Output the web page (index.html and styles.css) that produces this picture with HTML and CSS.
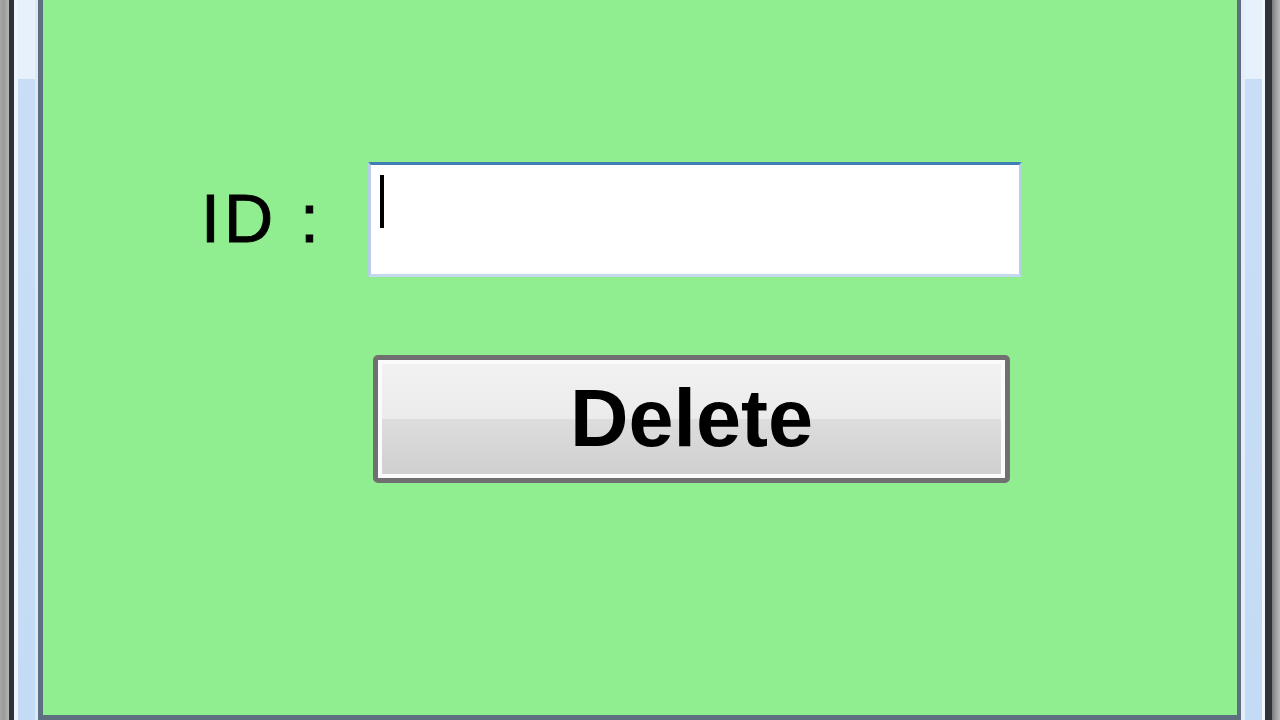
FILE: index.html
```html
<!DOCTYPE html>
<html lang="en">
<head>
<meta charset="utf-8">
<title>Delete</title>
<link rel="stylesheet" href="styles.css">
</head>
<body>
<div class="desk">
  <div class="edge-left"></div>
  <div class="frame">
    <div class="glass">
      <div class="client">
        <div class="row">
          <label class="label" for="id">ID :</label>
          <div class="textbox" id="id"><span class="caret"></span></div>
        </div>
        <button class="btn" type="button">Delete</button>
      </div>
    </div>
  </div>
  <div class="edge-right"></div>
</div>
</body>
</html>
```
FILE: styles.css
```css
html, body {
  margin: 0;
  padding: 0;
  height: 720px;
  overflow: hidden;
}

.desk {
  display: flex;
  height: 720px;
  font-family: "Liberation Sans", Arial, sans-serif;
}

.edge-left {
  width: 9px;
  background: linear-gradient(to right, #a7a7a7 0, #9b9b9b 40%, #b5b5b5 100%);
}

.edge-right {
  width: 8px;
  background: linear-gradient(to right, #7a7a7a 0, #9e9e9e 50%, #b8b8b8 100%);
}

.frame {
  flex: 1;
  display: flex;
  border-left: 5px solid #2e3439;
  border-right: 7px solid #2e3439;
}

.glass {
  flex: 1;
  display: flex;
  border-left: 4px solid #eef5fc;
  border-right: 3px solid #f3f8fd;
  padding: 0 21px 0 20px;
  background: linear-gradient(to bottom, #e7f1fc 0, #e7f1fc 79px, #c9def6 79px, #c4dbf5 100%);
}

.client {
  flex: 1;
  background: #90ee90;
  border-left: 5px solid #5c6e7f;
  border-right: 4px solid #5c6e7f;
  border-bottom: 5px solid #5c6e7f;
  box-shadow: -3px 0 0 #dbe8f5, 4px 0 0 #e4eef9;
  padding-top: 162px;
  box-sizing: border-box;
}

.row {
  display: flex;
  align-items: flex-start;
}

.label {
  width: 167px;
  margin-left: 158px;
  margin-top: 22px;
  font-size: 68px;
  line-height: 68px;
  letter-spacing: 4px;
  color: #000;
  -webkit-text-stroke: 1px #000;
}

.textbox {
  background: #fff;
  border-top: 3px solid #3f7fb6;
  border-left: 3px solid #b6cfe7;
  border-right: 3px solid #b6cfe7;
  border-bottom: 3px solid #c4d9ee;
  border-radius: 2px;
  padding: 10px 0 0 9px;
  box-sizing: content-box;
  height: 99px;
  width: 639px;
}

.caret {
  display: block;
  width: 4px;
  height: 53px;
  background: #000;
}

.btn {
  display: flex;
  align-items: center;
  justify-content: center;
  margin: 78px 0 0 330px;
  width: 637px;
  height: 128px;
  padding: 0 0 2px 0;
  border: 5px solid #707070;
  border-radius: 5px;
  box-shadow: inset 0 0 0 4px #fbfbfb;
  background: linear-gradient(to bottom, #f2f2f2 0, #ebebeb 50%, #dddddd 50%, #cfcfcf 100%);
  font-family: "Liberation Sans", Arial, sans-serif;
  font-weight: bold;
  font-size: 81px;
  line-height: 81px;
  color: #000;
  box-sizing: border-box;
}
```
